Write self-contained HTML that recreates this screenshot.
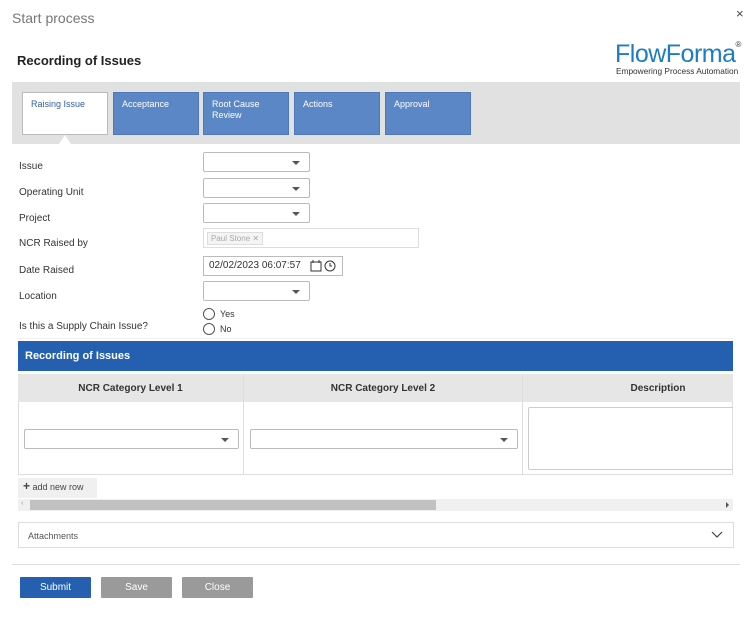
<!DOCTYPE html>
<html><head><style>
*{box-sizing:border-box;margin:0;padding:0}
body{width:750px;height:629px;background:#fff;font-family:"Liberation Sans",sans-serif;position:relative;overflow:hidden;color:#333}
.a{position:absolute}
.lbl{position:absolute;left:19px;font-size:10px;color:#333}
.sel{position:absolute;left:203px;width:107px;height:20px;border:1px solid #bbb;border-radius:2px;background:#fff}
.sel:after{content:"";position:absolute;right:9px;top:8px;border-left:4px solid transparent;border-right:4px solid transparent;border-top:4px solid #555}
.tab{position:absolute;top:92px;height:43px;width:86px;background:#5b87c6;color:#fff;font-size:9px;padding:6px 8px;line-height:11px;border:1px solid #4d79b8}
.btn{position:absolute;top:577px;height:21px;width:71px;color:#fff;font-size:10px;text-align:center;line-height:21px;border-radius:1px}
.rad{position:absolute;left:203px;width:12px;height:12px;border:1px solid #555;border-radius:50%}
</style></head><body>
<div class="a" style="left:12px;top:10px;font-size:14px;color:#777">Start process</div>
<div class="a" style="left:736px;top:6px;font-size:13px;color:#444">×</div>
<div class="a" style="left:17px;top:53px;font-size:13px;font-weight:bold;color:#222">Recording of Issues</div>
<div class="a" style="left:615px;top:40px;font-size:25px;color:#1e7cc4;letter-spacing:-0.5px">FlowForma<span style="font-size:8px;vertical-align:top;color:#333">®</span></div>
<div class="a" style="left:616px;top:66px;font-size:8.3px;color:#333">Empowering Process Automation</div>
<div class="a" style="left:12px;top:82px;width:728px;height:62px;background:#e1e1e1"></div>
<div class="tab" style="left:22px;background:#fff;color:#2f5fa8;border-color:#bbb">Raising Issue</div>
<div class="a" style="left:59px;top:135px;border-left:6px solid transparent;border-right:6px solid transparent;border-bottom:9px solid #fff"></div>
<div class="tab" style="left:113px">Acceptance</div>
<div class="tab" style="left:203px">Root Cause<br>Review</div>
<div class="tab" style="left:294px">Actions</div>
<div class="tab" style="left:385px">Approval</div>

<div class="lbl" style="top:161px">Issue</div><div class="sel" style="top:152px"></div>
<div class="lbl" style="top:187px">Operating Unit</div><div class="sel" style="top:178px"></div>
<div class="lbl" style="top:213px">Project</div><div class="sel" style="top:203px"></div>
<div class="lbl" style="top:238px">NCR Raised by</div>
<div class="a" style="left:203px;top:228px;width:216px;height:20px;border:1px solid #ddd"><span class="a" style="left:3px;top:3px;height:13px;padding:0 3px;border:1px solid #ddd;background:#f4f4f4;font-size:8px;color:#aaa;line-height:12px">Paul Stone ✕</span></div>
<div class="lbl" style="top:265px">Date Raised</div>
<div class="a" style="left:203px;top:256px;width:140px;height:20px;border:1px solid #bbb;font-size:10px;padding:3px 5px;color:#333">02/02/2023 06:07:57</div>
<svg class="a" style="left:310px;top:259px" width="30" height="14"><rect x="1" y="3" width="10" height="9" fill="none" stroke="#333"/><line x1="3" y1="1" x2="3" y2="4" stroke="#333"/><line x1="9" y1="1" x2="9" y2="4" stroke="#333"/><circle cx="20" cy="7" r="5" fill="none" stroke="#333"/><path d="M20 4V7H22" fill="none" stroke="#333"/></svg>
<div class="lbl" style="top:291px">Location</div><div class="sel" style="top:281px"></div>
<div class="rad" style="top:308px"></div><div class="a" style="left:220px;top:309px;font-size:9px">Yes</div>
<div class="rad" style="top:323px"></div><div class="a" style="left:220px;top:324px;font-size:9px">No</div>
<div class="lbl" style="top:321px">Is this a Supply Chain Issue?</div>
<div class="a" style="left:18px;top:338px;width:715px;height:1px;background:#eee"></div>

<div class="a" style="left:18px;top:341px;width:715px;height:30px;background:#2560b0;color:#fff;font-weight:bold;font-size:11px;padding:9px 7px">Recording of Issues</div>
<div class="a" style="left:18px;top:374px;width:715px;height:28px;background:#e6e6e6"></div>
<div class="a" style="left:18px;top:402px;width:715px;height:73px;border:1px solid #ddd;border-top:none"></div>
<div class="a" style="left:243px;top:374px;width:1px;height:101px;background:#ddd"></div>
<div class="a" style="left:522px;top:374px;width:1px;height:101px;background:#ddd"></div>
<div class="a" style="left:18px;top:383px;width:225px;text-align:center;font-size:10px;font-weight:bold">NCR Category Level 1</div>
<div class="a" style="left:244px;top:383px;width:278px;text-align:center;font-size:10px;font-weight:bold">NCR Category Level 2</div>
<div class="a" style="left:523px;top:383px;width:270px;text-align:center;font-size:10px;font-weight:bold">Description</div>
<div class="sel" style="left:24px;top:429px;width:215px"></div>
<div class="sel" style="left:250px;top:429px;width:268px"></div>
<div class="a" style="left:528px;top:407px;width:205px;height:63px;border:1px solid #ccc;border-right:none;border-radius:2px 0 0 2px"></div>
<div class="a" style="left:18px;top:478px;width:79px;height:20px;background:#f0f0f0;font-size:9px;padding:4px 5px;color:#444"><b style="font-size:12px;line-height:9px">+</b> add new row</div>
<div class="a" style="left:18px;top:499px;width:715px;height:12px;background:#f0f0f0"></div>
<div class="a" style="left:30px;top:500px;width:406px;height:10px;background:#c1c1c1"></div>
<div class="a" style="left:21px;top:500px;font-size:7px;color:#999">‹</div>
<div class="a" style="left:726px;top:502px;border-top:3px solid transparent;border-bottom:3px solid transparent;border-left:3px solid #555"></div>
<div class="a" style="left:18px;top:522px;width:716px;height:26px;border:1px solid #ddd;font-size:9px;padding:8px 9px;color:#555">Attachments</div>
<svg class="a" style="left:711px;top:531px" width="12" height="8"><path d="M1 1L6 6L11 1" fill="none" stroke="#444" stroke-width="1.2"/></svg>
<div class="a" style="left:12px;top:564px;width:728px;height:1px;background:#ddd"></div>
<div class="btn" style="left:20px;background:#2560b0">Submit</div>
<div class="btn" style="left:101px;background:#9a9a9a">Save</div>
<div class="btn" style="left:182px;background:#9a9a9a">Close</div>
</body></html>
